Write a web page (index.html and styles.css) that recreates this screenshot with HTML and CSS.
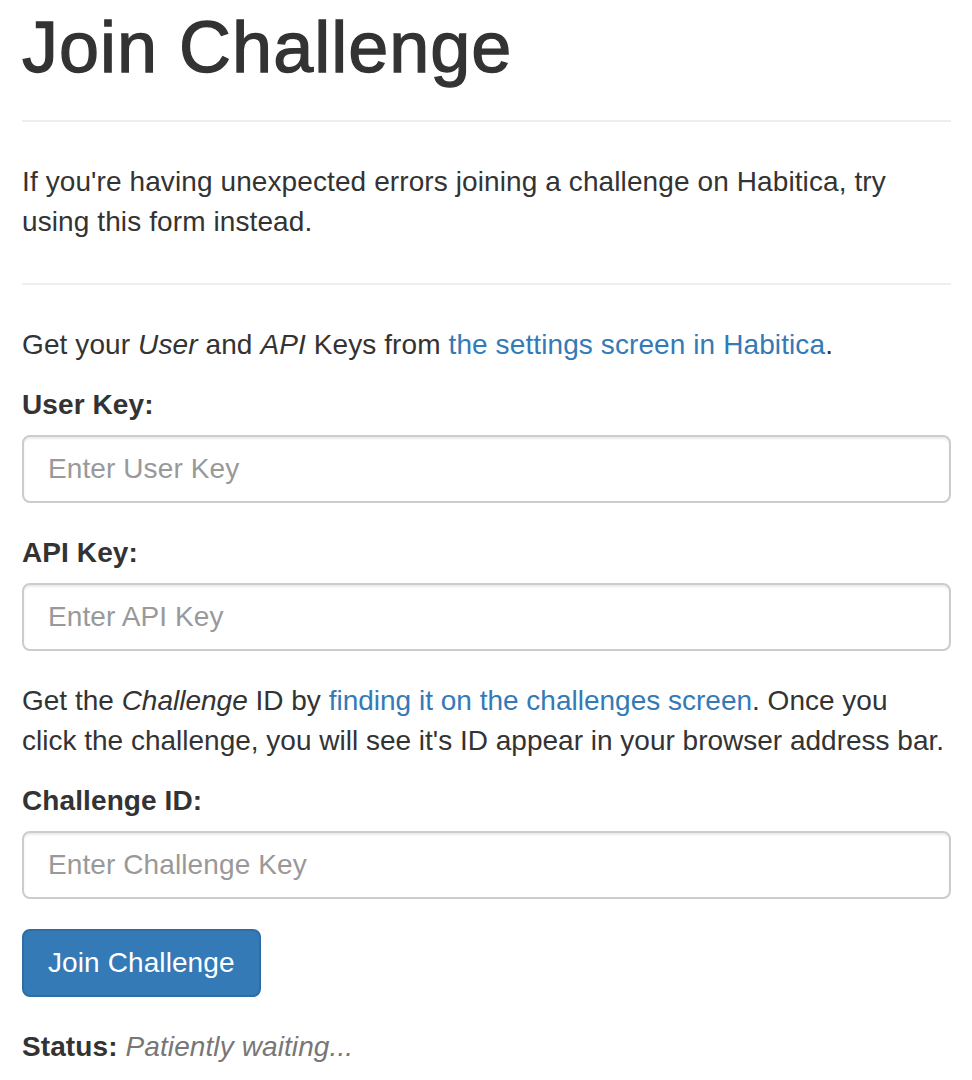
FILE: index.html
```html
<!DOCTYPE html>
<html lang="en">
<head>
<meta charset="utf-8">
<title>Join Challenge</title>
<link rel="stylesheet" href="styles.css">
</head>
<body>
<main class="container">
  <h1 class="title">Join Challenge</h1>
  <hr class="rule rule-top">
  <p class="intro">If you're having unexpected errors joining a challenge on Habitica, try using this form instead.</p>
  <hr class="rule rule-mid">
  <form class="join-form" onsubmit="return false;">
    <p class="help">Get your <em>User</em> and <em>API</em> Keys from <a href="#">the settings screen in Habitica</a>.</p>
    <div class="form-group">
      <label class="field-label" for="userKey">User Key:</label>
      <input class="field" id="userKey" type="text" placeholder="Enter User Key">
    </div>
    <div class="form-group">
      <label class="field-label" for="apiKey">API Key:</label>
      <input class="field" id="apiKey" type="text" placeholder="Enter API Key">
    </div>
    <p class="help help-tight">Get the <em>Challenge</em> ID by <a href="#">finding it on the challenges screen</a>. Once you<br>click the challenge, you will see it's ID appear in your browser address bar.</p>
    <div class="form-group">
      <label class="field-label" for="challengeId">Challenge ID:</label>
      <input class="field" id="challengeId" type="text" placeholder="Enter Challenge Key">
    </div>
    <div class="actions">
      <button class="btn-primary" type="submit">Join Challenge</button>
    </div>
  </form>
  <p class="status"><strong>Status:</strong> <em class="status-text">Patiently waiting...</em></p>
</main>
</body>
</html>
```

FILE: styles.css
```css
html, body {
  margin: 0;
  padding: 0;
  background: #fff;
}

body {
  font-family: "Liberation Sans", Arial, Helvetica, sans-serif;
  font-size: 28px;
  line-height: 40px;
  letter-spacing: 0.1px;
  color: #333;
}

.container {
  padding: 0 21px 0 22px;
}

.title {
  margin: 8px 0 0;
  font-size: 72px;
  line-height: 79px;
  font-weight: 500;
  letter-spacing: 1px;
  color: #333;
  -webkit-text-stroke: 1.3px #333;
}

.rule {
  border: 0;
  border-top: 2px solid #eee;
  height: 0;
}

.rule-top {
  margin: 33px 0 40px;
}

.rule-mid {
  margin: 41px 0 40px;
}

.intro {
  margin: 0;
}

.help {
  margin: 0 0 20px;
}

.help-tight {
  letter-spacing: 0;
  white-space: nowrap;
}

.help a {
  color: #337ab7;
  text-decoration: none;
}

.form-group {
  margin-bottom: 30px;
}

.field-label {
  display: block;
  font-weight: bold;
  margin-bottom: 10px;
}

.field {
  display: block;
  box-sizing: border-box;
  width: 100%;
  height: 68px;
  padding: 12px 24px;
  font-family: inherit;
  font-size: 28px;
  line-height: 40px;
  letter-spacing: 0.1px;
  color: #555;
  background: #fff;
  border: 2px solid #ccc;
  border-radius: 8px;
  box-shadow: inset 0 2px 2px rgba(0, 0, 0, 0.075);
  outline: none;
}

.field::placeholder {
  color: #999;
  opacity: 1;
}

.actions {
  margin-bottom: 30px;
}

.btn-primary {
  display: inline-block;
  box-sizing: border-box;
  height: 68px;
  padding: 12px 24px;
  font-family: inherit;
  font-size: 28px;
  line-height: 40px;
  letter-spacing: 0.1px;
  color: #fff;
  background: #337ab7;
  border: 2px solid #2e6da4;
  border-radius: 8px;
  cursor: pointer;
}

.status {
  margin: 0;
}

.status-text {
  color: #777;
}
```
